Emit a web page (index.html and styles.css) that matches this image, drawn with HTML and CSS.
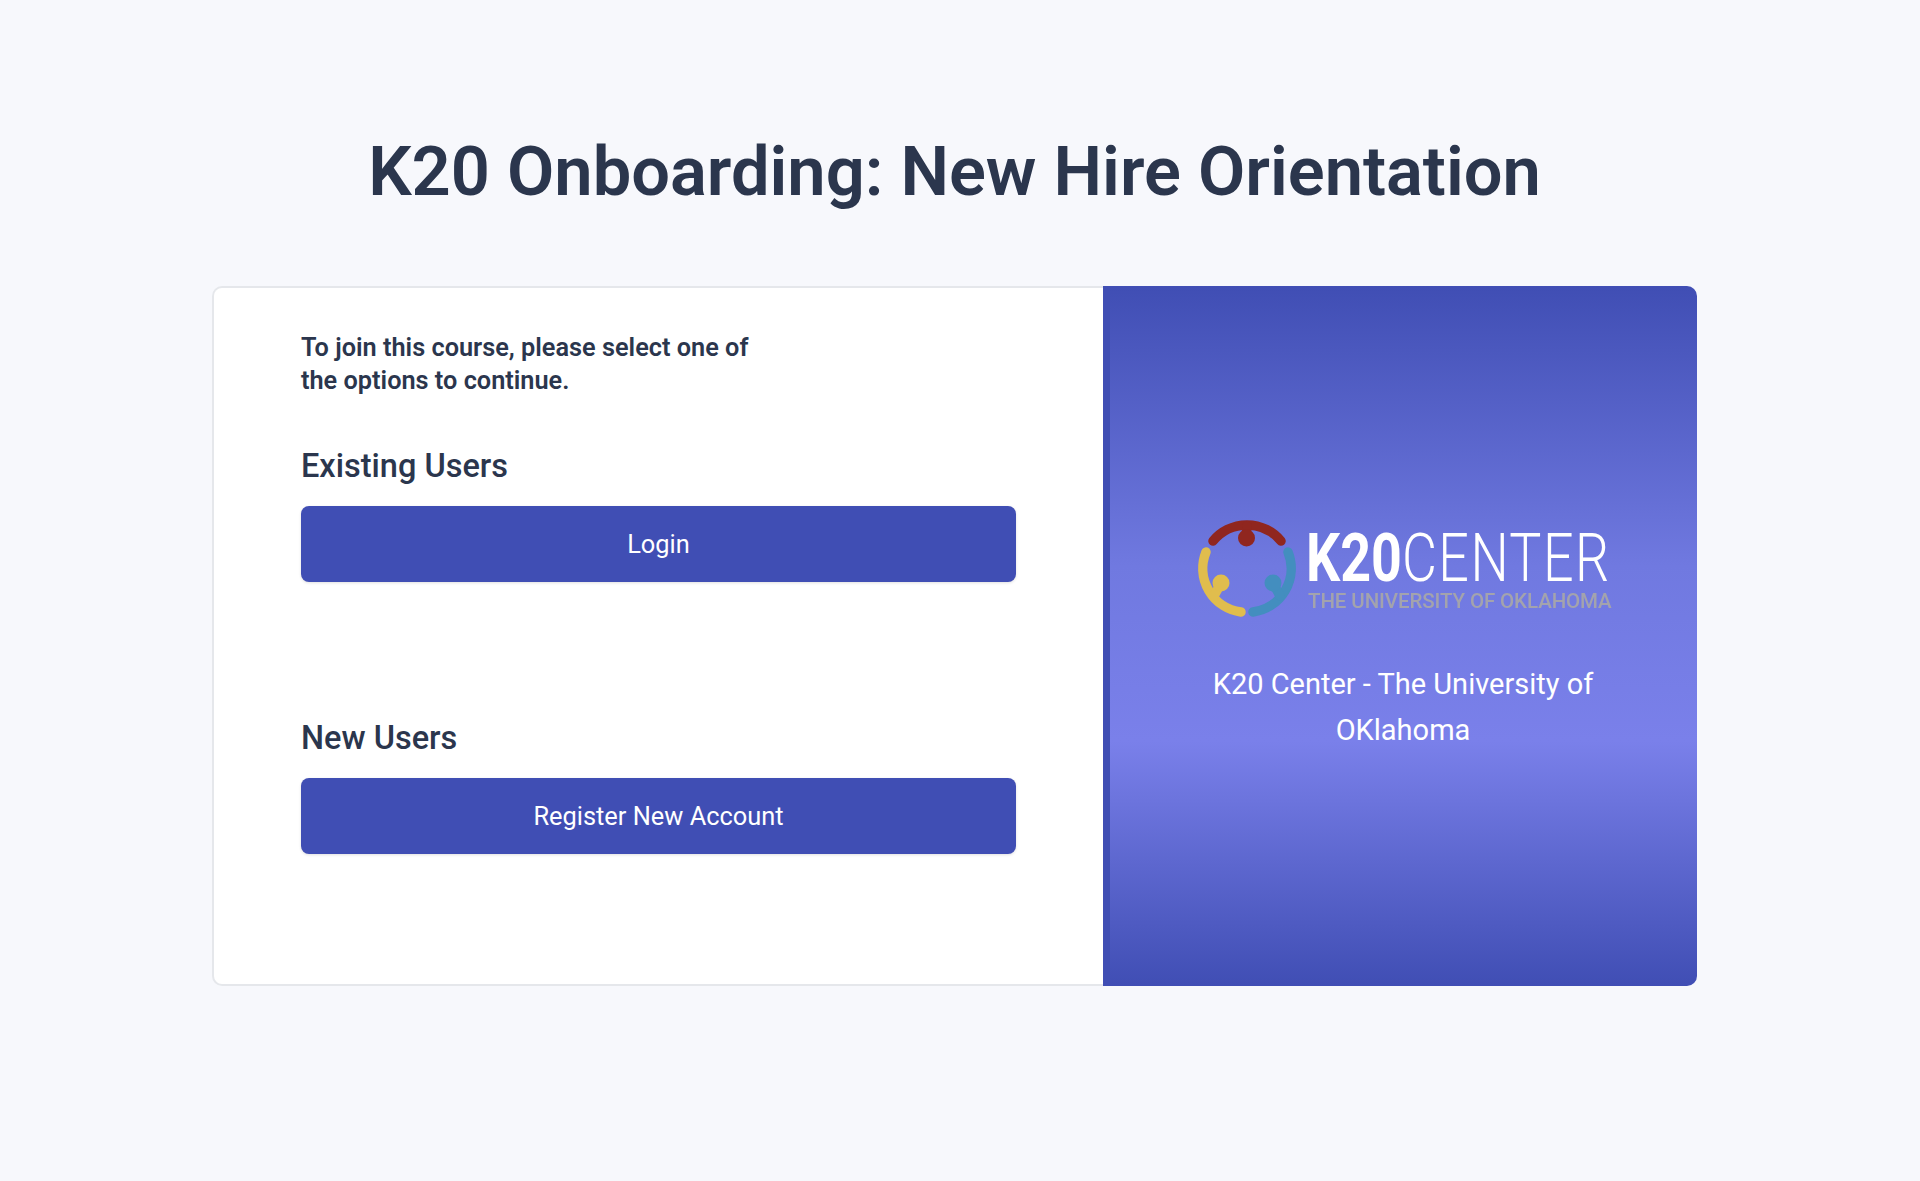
FILE: index.html
```html
<!DOCTYPE html>
<html lang="en">
<head>
<meta charset="utf-8">
<title>K20 Onboarding: New Hire Orientation</title>
<link rel="stylesheet" href="styles.css">
</head>
<body>
<main class="page">
  <h1 class="title">K20 Onboarding: New Hire Orientation</h1>
  <section class="card">
    <div class="options">
      <p class="intro">To join this course, please select one of the options to continue.</p>
      <div class="group">
        <h2 class="group-title">Existing Users</h2>
        <a class="btn" href="#">Login</a>
      </div>
      <div class="group">
        <h2 class="group-title">New Users</h2>
        <a class="btn" href="#">Register New Account</a>
      </div>
    </div>
    <aside class="brand">
      <div class="logo">
        <svg class="logo-mark" viewBox="0 0 100 100" width="100" height="100" aria-hidden="true">
          <g fill="none" stroke-width="9.500" stroke-linecap="round">
            <path d="M16 23A44 44 0 0 1 84 23" stroke="#90261f"/>
            <path d="M9 34A44 44 0 0 0 44 94" stroke="#e0bd4d"/>
            <path d="M91 34A44 44 0 0 1 56 94" stroke="#438ebf"/>
            <path d="M50 8 49 20" stroke="#90261f"/>
            <path d="M24 65 17 78" stroke="#e0bd4d"/>
            <path d="M76 65 83 78" stroke="#438ebf"/>
          </g>
          <circle cx="49.500" cy="20" r="8.500" fill="#90261f"/>
          <circle cx="24" cy="65" r="8.500" fill="#e0bd4d"/>
          <circle cx="76" cy="65" r="8.500" fill="#438ebf"/>
        </svg>
        <div class="logo-text">
          <div class="wordmark"><span class="wm-bold">K20</span><span class="wm-light">CENTER</span></div>
          <div class="tagline">THE UNIVERSITY OF OKLAHOMA</div>
        </div>
      </div>
      <p class="brand-name">K20 Center - The University of OKlahoma</p>
    </aside>
  </section>
</main>
</body>
</html>
```

FILE: styles.css
```css
* { box-sizing: border-box; }
html, body { margin: 0; height: 100%; }
body {
  background: #f7f8fc;
  color: #2b364d;
  font-family: Roboto, "Liberation Sans", sans-serif;
}
.page {
  display: flex;
  flex-direction: column;
  align-items: center;
  padding: 129px 11px 0 0;
}
.title {
  margin: 0 0 71px;
  font-size: 68.600px;
  line-height: 86px;
  font-weight: 600;
  text-align: center;
}
.card {
  display: flex;
  width: 1485px;
  height: 700px;
}
.options {
  width: 891px;
  flex: none;
  padding: 43px 87px 0 87px;
  background: #fff;
  border: 2px solid #e5e7eb;
  border-right: 0;
  border-radius: 10px 0 0 10px;
}
.intro {
  margin: 0;
  max-width: 480px;
  font-size: 25.300px;
  line-height: 33px;
  font-weight: 600;
}
.group { margin-bottom: 134px; }
.intro + .group { margin-top: 47px; }
.group-title {
  margin: 0 0 18px;
  font-size: 32.500px;
  line-height: 44px;
  font-weight: 500;
}
.btn {
  display: flex;
  align-items: center;
  justify-content: center;
  height: 76px;
  border-radius: 8px;
  background: #404eb4;
  color: #fff;
  font-size: 25.400px;
  text-decoration: none;
  box-shadow: 0 1px 3px rgba(0, 0, 0, .12);
}
.brand {
  flex: 1;
  min-width: 0;
  display: flex;
  flex-direction: column;
  align-items: center;
  justify-content: center;
  padding: 0 41px 2px 40px;
  color: #fff;
  background: linear-gradient(180deg, #404eb4 0%, #7079e0 40%, #7a80ea 65%, #404eb4 100%);
  border-left: 7px solid #404eb4;
  border-radius: 0 10px 10px 0;
}
.logo {
  display: flex;
  align-items: flex-start;
  gap: 11px;
  width: 412px;
  flex: none;
  filter: blur(.4px);
}
.logo-mark { flex: none; }
.logo-text { flex: none; width: 301px; display: flex; flex-direction: column; }
.wordmark {
  font-size: 66px;
  line-height: 66px;
  margin: 8px 0 0 -2px;
  white-space: nowrap;
  transform: scaleX(.815);
  transform-origin: left center;
}
.wm-bold { font-weight: 700; }
.wm-light { font-weight: 300; letter-spacing: 1.800px; }
.tagline {
  margin-top: -3px;
  font-size: 20.500px;
  line-height: 24px;
  font-weight: 500;
  color: #a3a3ad;
  white-space: nowrap;
  letter-spacing: -.1px;
}
.brand-name {
  margin: 43px 0 0;
  text-align: center;
  font-size: 29px;
  line-height: 46px;
}
```
